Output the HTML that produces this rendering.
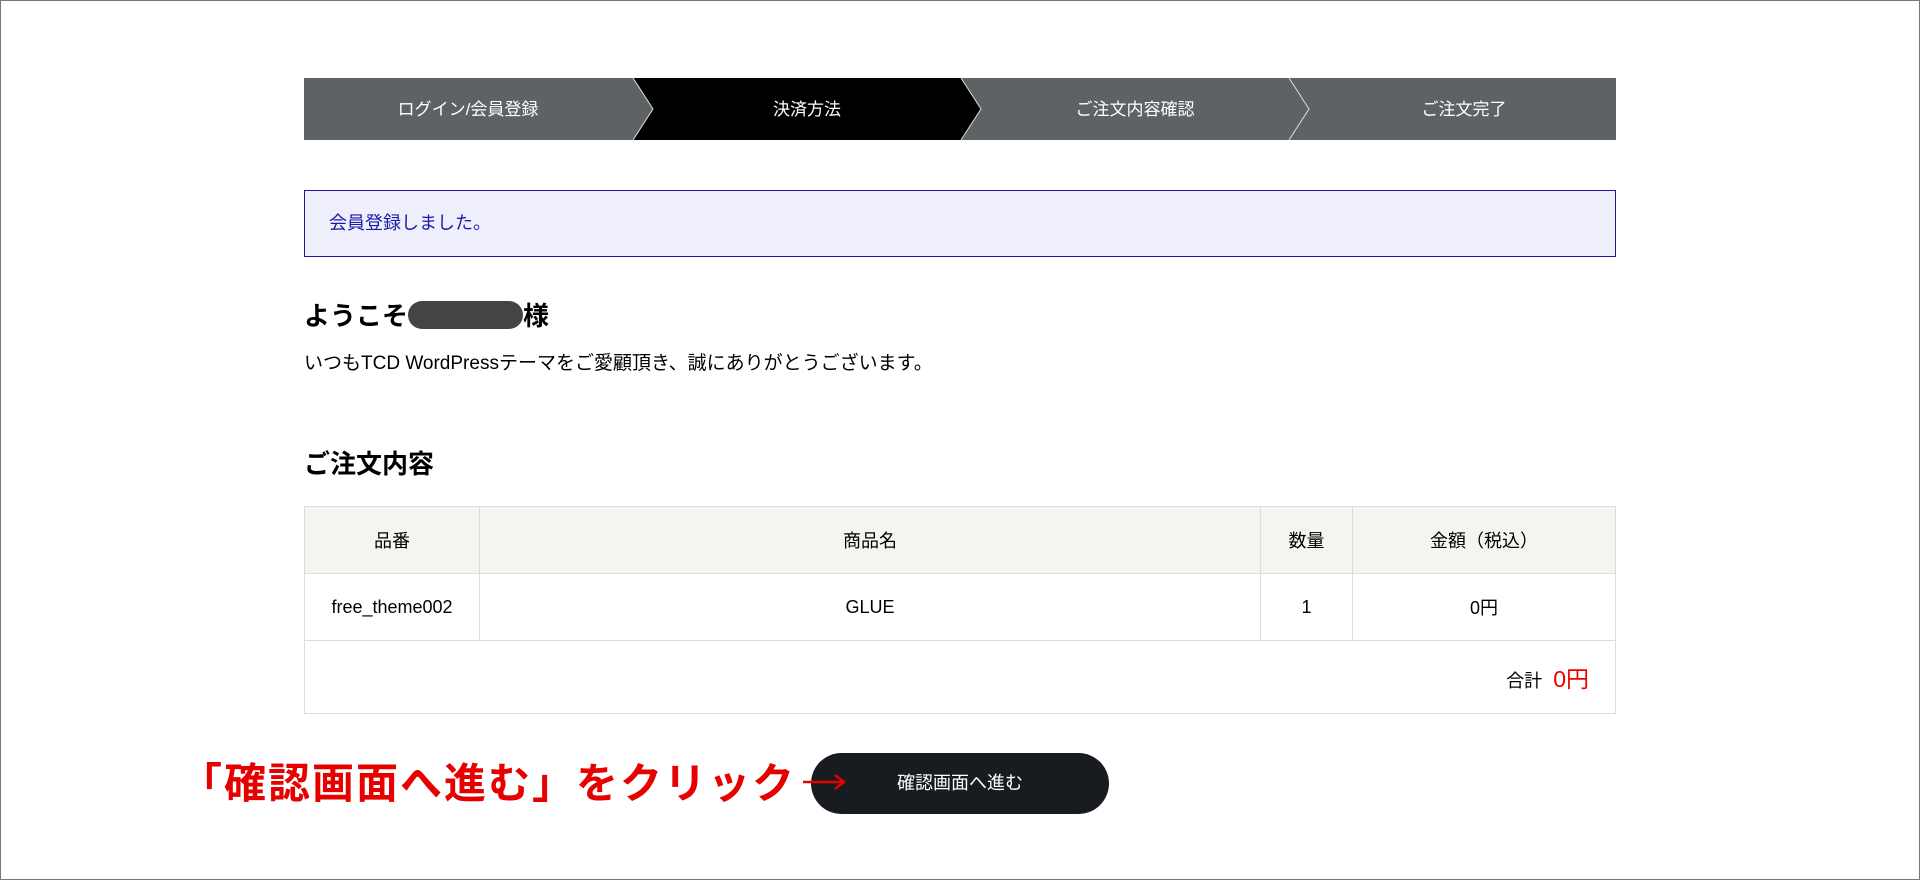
<!DOCTYPE html>
<html><head><meta charset="utf-8"><style>
html,body{margin:0;padding:0}
body{width:1920px;height:880px;position:relative;background:#fff;font-family:"Liberation Sans","Noto Sans CJK JP",sans-serif;color:#000;overflow:hidden}
.frame{position:absolute;left:0;top:0;width:1918px;height:878px;border:1px solid #777}
.abs{position:absolute}
.notice{left:304px;top:190px;width:1310px;height:65px;border:1px solid #1a1a9a;background:#efeffc;color:#1a1aa8;font-size:18px;line-height:65px;box-sizing:content-box}
.notice span{padding-left:24px}
table{border-collapse:collapse;position:absolute;left:304px;top:506px;width:1312px;font-size:18px}
td,th{border:1px solid #ddd;text-align:center;font-weight:normal;padding:0}
th{background:#f5f4f0;height:66px}
td{height:66px}
</style></head><body>
<div class="frame"></div>
<svg class="abs" style="left:304px;top:78px" width="1312" height="62">
<polygon points="0,0 329,0 349,31 329,62 0,62" fill="#5d6264"/>
<polygon points="329,0 657,0 677,31 657,62 329,62 349,31" fill="#000"/>
<polygon points="657,0 985,0 1005,31 985,62 657,62 677,31" fill="#5d6264"/>
<polygon points="985,0 1312,0 1312,62 985,62 1005,31" fill="#5d6264"/>
<polyline points="329,0 349,31 329,62" fill="none" stroke="#ddd" stroke-width="1"/>
<polyline points="657,0 677,31 657,62" fill="none" stroke="#ddd" stroke-width="1"/>
<polyline points="985,0 1005,31 985,62" fill="none" stroke="#ddd" stroke-width="1"/>
<g fill="#fff" font-size="17" text-anchor="middle" font-family="Liberation Sans, Noto Sans CJK JP, sans-serif">
<text x="164" y="37">ログイン/会員登録</text>
<text x="503" y="37">決済方法</text>
<text x="831" y="37">ご注文内容確認</text>
<text x="1160" y="37">ご注文完了</text>
</g></svg>
<div class="abs notice"><span>会員登録しました。</span></div>
<div class="abs" style="left:304px;top:298px;font-size:26px;font-weight:bold;line-height:36px">ようこそ<span style="display:inline-block;width:115px;height:28px;background:#444;border-radius:14px;vertical-align:-4px"></span>様</div>
<div class="abs" style="left:304px;top:350px;font-size:19px;line-height:28px">いつもTCD WordPressテーマをご愛顧頂き、誠にありがとうございます。</div>
<div class="abs" style="left:304px;top:446px;font-size:26px;font-weight:bold;line-height:36px">ご注文内容</div>
<table>
<tr><th style="width:174px">品番</th><th>商品名</th><th style="width:91px">数量</th><th style="width:262px">金額（税込）</th></tr>
<tr><td>free_theme002</td><td>GLUE</td><td>1</td><td>0円</td></tr>
<tr><td colspan="4" style="height:72px;text-align:right;padding-right:26px">合計 <span style="color:#e00;font-size:23px;margin-left:6px">0円</span></td></tr>
</table>
<div class="abs" style="left:811px;top:753px;width:298px;height:61px;border-radius:31px;background:#181c21;color:#fff;font-size:18px;line-height:61px;text-align:center">確認画面へ進む</div>
<div class="abs" style="left:180px;top:756px;font-size:42px;font-weight:bold;color:#e60000;line-height:56px;letter-spacing:2px;white-space:nowrap">「確認画面へ進む」をクリック</div>
<svg class="abs" style="left:803px;top:772px" width="44" height="20"><path d="M0 10H40M32 3L41 10L32 17" fill="none" stroke="#e60000" stroke-width="2.5"/></svg>
</body></html>
